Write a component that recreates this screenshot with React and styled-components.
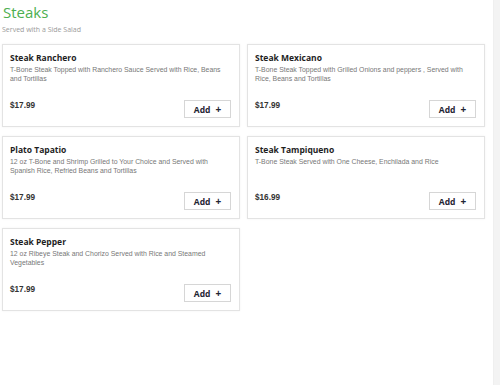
import React from "react";
import styled, { createGlobalStyle } from "styled-components";

const Global = createGlobalStyle`
  html, body { margin: 0; padding: 0; background: #fff; }
  body { font-family: "Open Sans", "Liberation Sans", sans-serif; }
`;

const Page = styled.div`
  display: flex;
  width: 500px;
  height: 385px;
  overflow: hidden;
`;

const Main = styled.main`
  flex: 1;
  padding: 0 8px 0 2px;
`;

const Track = styled.div`
  width: 6px;
  background: #f3f3f3;
  border-left: 1px solid #efefef;
`;

const Heading = styled.h2`
  margin: 0;
  padding: 2px 0 0 1px;
  font-size: 15px;
  line-height: 20px;
  font-weight: 400;
  color: #4caf50;
`;

const Sub = styled.p`
  margin: 3px 0 0 0;
  font-size: 7px;
  line-height: 10px;
  color: #9a9a9a;
`;

const Grid = styled.div`
  margin-top: 9px;
  display: grid;
  grid-template-columns: 238px 238px;
  column-gap: 7px;
  row-gap: 9px;
`;

const Card = styled.div`
  height: 83px;
  box-sizing: border-box;
  border: 1px solid #e3e3e3;
  box-shadow: 0 0 2px rgba(0, 0, 0, 0.06);
  padding: 7px 8px 8px 7px;
  display: flex;
  flex-direction: column;
`;

const Title = styled.div`
  font-size: 8.5px;
  font-weight: 700;
  line-height: 11px;
  color: #1e1e1e;
`;

const Desc = styled.div`
  margin-top: 2px;
  font-family: "Liberation Sans", Arial, sans-serif;
  font-size: 6.9px;
  line-height: 9px;
  color: #777;
`;

const Footer = styled.div`
  margin-top: auto;
  display: flex;
  justify-content: space-between;
  align-items: flex-start;
`;

const Price = styled.div`
  margin-top: 1px;
  font-family: "Liberation Sans", Arial, sans-serif;
  font-size: 8.2px;
  font-weight: 700;
  color: #333;
`;

const AddBtn = styled.button`
  width: 47px;
  height: 18px;
  box-sizing: border-box;
  border: 1px solid #d6d6d6;
  background: #fff;
  padding: 0;
  display: flex;
  align-items: center;
  justify-content: center;
  gap: 5px;
  font-family: "Open Sans", sans-serif;
  font-size: 8.5px;
  font-weight: 700;
  color: #1f2533;
  cursor: pointer;
`;

const Plus = styled.span`
  font-size: 10px;
  line-height: 1;
`;

const items = [
  { name: "Steak Ranchero", desc: "T-Bone Steak Topped with Ranchero Sauce Served with Rice, Beans and Tortillas", price: "$17.99" },
  { name: "Steak Mexicano", desc: "T-Bone Steak Topped with Grilled Onions and peppers , Served with Rice, Beans and Tortillas", price: "$17.99" },
  { name: "Plato Tapatio", desc: "12 oz T-Bone and Shrimp Grilled to Your Choice and Served with Spanish Rice, Refried Beans and Tortillas", price: "$17.99" },
  { name: "Steak Tampiqueno", desc: "T-Bone Steak Served with One Cheese, Enchilada and Rice", price: "$16.99" },
  { name: "Steak Pepper", desc: "12 oz Ribeye Steak and Chorizo Served with Rice and Steamed Vegetables", price: "$17.99" },
];

export default function App() {
  return (
    <>
      <Global />
      <Page>
        <Main>
          <Heading>Steaks</Heading>
          <Sub>Served with a Side Salad</Sub>
          <Grid>
            {items.map((it) => (
              <Card key={it.name}>
                <Title>{it.name}</Title>
                <Desc>{it.desc}</Desc>
                <Footer>
                  <Price>{it.price}</Price>
                  <AddBtn>
                    Add <Plus>+</Plus>
                  </AddBtn>
                </Footer>
              </Card>
            ))}
          </Grid>
        </Main>
        <Track />
      </Page>
    </>
  );
}
